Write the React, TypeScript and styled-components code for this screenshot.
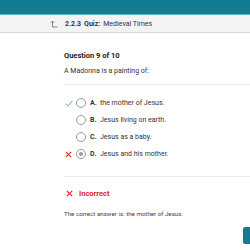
import React from "react";
import styled, { createGlobalStyle } from "styled-components";

const Global = createGlobalStyle`
  html, body { margin: 0; padding: 0; background: #fff; }
  body { font-family: Roboto, "Liberation Sans", Arial, sans-serif; color: #333; }
`;

const Page = styled.div`
  width: 250px;
  height: 250px;
  overflow: hidden;
  position: relative;
  display: flex;
  flex-direction: column;
`;

const TopBar = styled.div`
  height: 14px;
  background: #127d91;
  border-bottom: 1px solid #5fb4c2;
`;

const SubBar = styled.div`
  height: 17px;
  background: #f3f3f3;
  border-bottom: 1px solid #d6d6d6;
  display: flex;
  align-items: center;
  padding-left: 50px;
  gap: 7px;
  font-size: 7px;
  color: #333;
`;

const Crumb = styled.span`
  display: flex;
  gap: 3px;
  align-items: center;
`;

const Bold = styled.b`
  font-weight: 700;
`;

const Content = styled.div`
  padding: 18px 0 0 64px;
  display: flex;
  flex-direction: column;
`;

const QTitle = styled.div`
  font-size: 7.5px;
  font-weight: 700;
  color: #222;
  line-height: 10px;
`;

const QText = styled.div`
  font-size: 7px;
  margin-top: 5px;
  line-height: 10px;
  color: #333;
`;

const Divider = styled.div<{ $mt: number }>`
  height: 1px;
  background: #ececec;
  margin-top: ${(p) => p.$mt}px;
`;

const Options = styled.div`
  display: flex;
  flex-direction: column;
  gap: 7px;
  margin-top: 13px;
  margin-left: -64px;
`;

const Row = styled.div`
  display: flex;
  align-items: center;
  height: 10px;
  font-size: 7px;
  color: #333;
`;

const Mark = styled.span`
  width: 11px;
  margin-left: 65px;
  display: flex;
  align-items: center;
`;

const Radio = styled.span<{ $sel?: boolean }>`
  width: 8px;
  height: 8px;
  border-radius: 50%;
  border: 1px solid #9a9a9a;
  background: #fff;
  display: flex;
  align-items: center;
  justify-content: center;
  margin-right: 4px;
  &::after {
    content: "";
    display: ${(p) => (p.$sel ? "block" : "none")};
    width: 4px;
    height: 4px;
    border-radius: 50%;
    background: #9a9a9a;
  }
`;

const Letter = styled.span`
  font-weight: 700;
  width: 10px;
  color: #333;
`;

const Result = styled.div`
  display: flex;
  align-items: center;
  gap: 6px;
  margin-top: 12px;
  font-size: 7.5px;
  font-weight: 700;
  color: #e2231a;
  padding-left: 2px;
`;

const Answer = styled.div`
  font-size: 6.2px;
  margin-top: 12px;
  color: #444;
`;

const NextButton = styled.div`
  position: absolute;
  left: 243px;
  top: 227px;
  width: 20px;
  height: 17px;
  border-radius: 2px;
  background: #127d91;
`;

const Check = () => (
  <svg width="8" height="7" viewBox="0 0 8 7">
    <path d="M0.5 3.8 L2.8 6 L7.5 0.8" fill="none" stroke="#5bb55f" strokeWidth="1" />
  </svg>
);

const Cross = ({ size = 7 }: { size?: number }) => (
  <svg width={size} height={size} viewBox="0 0 7 7">
    <path d="M0.8 0.8 L6.2 6.2 M6.2 0.8 L0.8 6.2" stroke="#e2231a" strokeWidth="1.1" fill="none" />
  </svg>
);

const BackIcon = () => (
  <svg width="8" height="8" viewBox="0 0 8 8">
    <path d="M2.5 7 V1.2 M0.8 2.8 L2.5 1 L4.2 2.8 M2.5 7 H7.5" stroke="#666" strokeWidth="0.8" fill="none" />
  </svg>
);

const options = [
  { l: "A.", t: "the mother of Jesus.", mark: "check" },
  { l: "B.", t: "Jesus living on earth." },
  { l: "C.", t: "Jesus as a baby." },
  { l: "D.", t: "Jesus and his mother.", mark: "cross", sel: true },
];

export default function App() {
  return (
    <Page>
      <Global />
      <TopBar />
      <SubBar>
        <BackIcon />
        <Crumb>
          <Bold>2.2.3</Bold>
          <Bold>Quiz:</Bold>
          <span>Medieval Times</span>
        </Crumb>
      </SubBar>
      <Content>
        <QTitle>Question 9 of 10</QTitle>
        <QText>A Madonna is a painting of:</QText>
        <Divider $mt={8} />
        <Options>
          {options.map((o) => (
            <Row key={o.l}>
              <Mark>
                {o.mark === "check" && <Check />}
                {o.mark === "cross" && <Cross />}
              </Mark>
              <Radio $sel={o.sel} />
              <Letter>{o.l}</Letter>
              <span>{o.t}</span>
            </Row>
          ))}
        </Options>
        <Divider $mt={17} />
        <Result>
          <Cross />
          <span>Incorrect</span>
        </Result>
        <Answer>The correct answer is: the mother of Jesus.</Answer>
      </Content>
      <NextButton />
    </Page>
  );
}
